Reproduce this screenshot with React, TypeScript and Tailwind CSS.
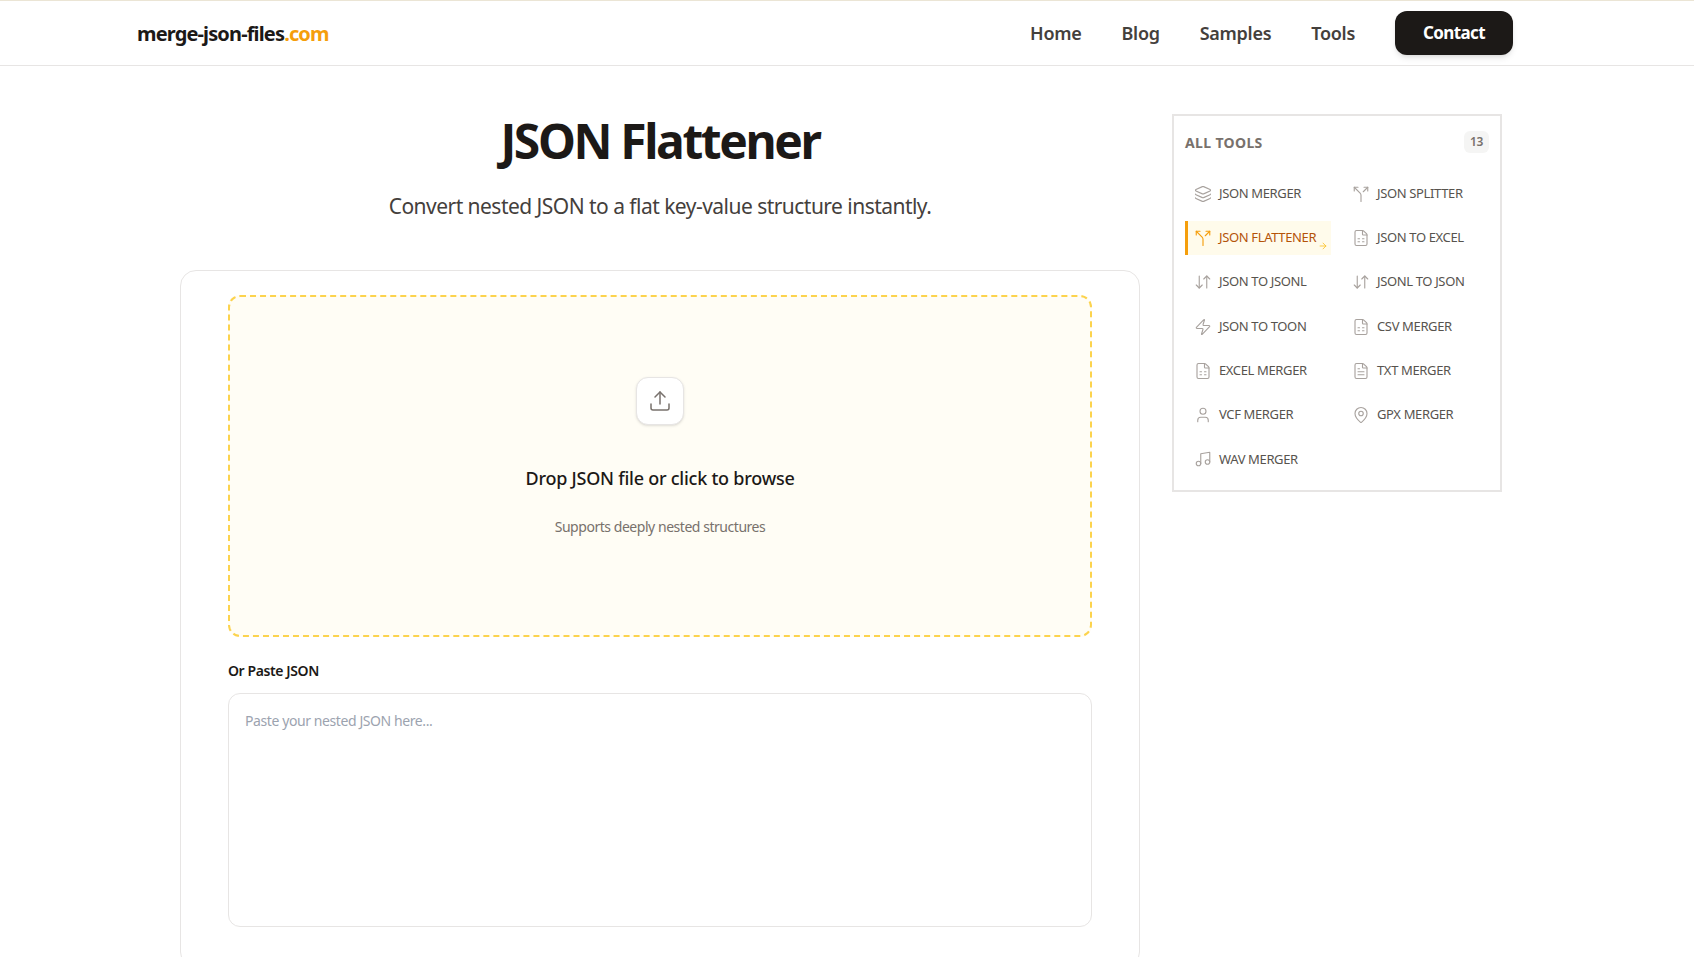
import { ArrowDownUp, ArrowRight, FileSpreadsheet, FileText, Layers, MapPin, Music, Split, Upload, User, Zap } from "lucide-react";

const font = { fontFamily: '"Noto Sans", "Open Sans", sans-serif' };

const tools = [
    { name: "JSON Merger", icon: Layers },
    { name: "JSON Splitter", icon: Split },
    { name: "JSON Flattener", icon: Split, active: true },
    { name: "JSON to Excel", icon: FileSpreadsheet },
    { name: "JSON to JSONL", icon: ArrowDownUp },
    { name: "JSONL to JSON", icon: ArrowDownUp },
    { name: "JSON to TOON", icon: Zap },
    { name: "CSV Merger", icon: FileSpreadsheet },
    { name: "Excel Merger", icon: FileSpreadsheet },
    { name: "TXT Merger", icon: FileText },
    { name: "VCF Merger", icon: User },
    { name: "GPX Merger", icon: MapPin },
    { name: "WAV Merger", icon: Music },
];

function Header() {
    return (
        <header className="h-[66px] border-t border-b border-t-[#ebe5d5] border-b-[#e7e5e4] bg-white pl-[137px] pr-[181px] flex items-center justify-between">
            <div className="pt-[2px] text-[20px] font-bold tracking-[-0.85px] text-[#1c1917]">
                merge-json-files<span className="text-[#f59e0b]">.com</span>
            </div>
            <nav className="flex items-center gap-10">
                <a className="text-[18px] font-semibold tracking-[-0.28px] text-[#44403c]">Home</a>
                <a className="text-[18px] font-semibold tracking-[-0.28px] text-[#44403c]">Blog</a>
                <a className="text-[18px] font-semibold tracking-[-0.28px] text-[#44403c]">Samples</a>
                <a className="text-[18px] font-semibold tracking-[-0.28px] text-[#44403c]">Tools</a>
                <button className="h-11 w-[118px] rounded-xl bg-[#1c1917] text-[17px] font-bold tracking-[-0.6px] text-white shadow-md">
                    Contact
                </button>
            </nav>
        </header>
    );
}

function Sidebar() {
    return (
        <aside className="w-[330px] h-[378px] shrink-0 border-2 border-[#e7e5e4] bg-white px-[11px] pt-[15px]">
            <div className="flex items-center justify-between h-[22px]">
                <h2 className="pt-[1px] text-[14px] font-bold tracking-[0.35px] text-[#78716c]">ALL TOOLS</h2>
                <span className="flex h-[22px] w-[25px] items-center justify-center rounded-md bg-[#f5f5f4] text-[12px] font-semibold tracking-[-0.3px] text-[#78716c]">13</span>
            </div>
            <div className="mt-[24px] grid grid-cols-[146px_1fr] gap-x-[12px] gap-y-[11px]">
                {tools.map((tool) => {
                    const Icon = tool.icon;
                    return (
                        <div
                            key={tool.name}
                            className={
                                tool.active
                                    ? "relative flex h-[33.3px] items-center gap-[7px] border-l-[3px] border-[#f59e0b] bg-[#fffbeb] pl-[6px] text-[#b45309]"
                                    : "relative flex h-[33.3px] items-center gap-[7px] pl-[9px] text-[#57534e]"
                            }
                        >
                            <Icon
                                size={18}
                                strokeWidth={1.5}
                                className={tool.active ? "shrink-0 text-[#f59e0b]" : "shrink-0 text-[#a8a29e]"}
                            />
                            <span className="text-[13px] uppercase tracking-[-0.36px]">{tool.name}</span>
                            {tool.active && (
                                <ArrowRight size={10} strokeWidth={2} className="absolute right-[3px] bottom-[4px] text-[#fbbf24]" />
                            )}
                        </div>
                    );
                })}
            </div>
        </aside>
    );
}

export default function App() {
    return (
        <div className="h-screen overflow-hidden bg-white" style={font}>
            <Header />
            <main className="flex items-start gap-8 pl-[180px] pt-12">
                <div className="w-[960px] shrink-0">
                    <h1 className="-mt-[1px] text-center text-[48px] leading-[56px] font-bold tracking-[-2.4px] text-[#1c1917]">JSON Flattener</h1>
                    <p className="mt-[23px] text-center text-[21px] leading-7 tracking-[-0.53px] text-[#44403c]">
                        Convert nested JSON to a flat key-value structure instantly.
                    </p>
                    <section className="mt-[50px] rounded-2xl border border-[#e7e5e4] bg-white px-[47px] pt-6 pb-10">
                        <div className="flex h-[342px] flex-col items-center rounded-xl border-2 border-dashed border-[#fcd34d] bg-[#fffdf5] pt-[80px]">
                            <div className="flex h-12 w-12 items-center justify-center rounded-xl border border-[#e7e5e4] bg-white shadow-sm">
                                <Upload size={24} strokeWidth={1.5} className="text-[#78716c]" />
                            </div>
                            <p className="mt-[39px] text-[18px] leading-7 font-medium tracking-[-0.24px] text-[#1c1917]">Drop JSON file or click to browse</p>
                            <p className="mt-[25px] text-[14px] leading-5 tracking-[-0.46px] text-[#78716c]">Supports deeply nested structures</p>
                        </div>
                        <label className="mt-6 block text-[14px] leading-5 font-semibold tracking-[-0.4px] text-[#1c1917]">Or Paste JSON</label>
                        <textarea
                            className="mt-[12px] block h-[234px] w-full resize-none rounded-xl border border-[#e7e5e4] px-4 py-4 text-[14px] tracking-[-0.41px] placeholder:text-[#9ca3af]"
                            placeholder="Paste your nested JSON here..."
                        />
                    </section>
                </div>
                <Sidebar />
            </main>
        </div>
    );
}
